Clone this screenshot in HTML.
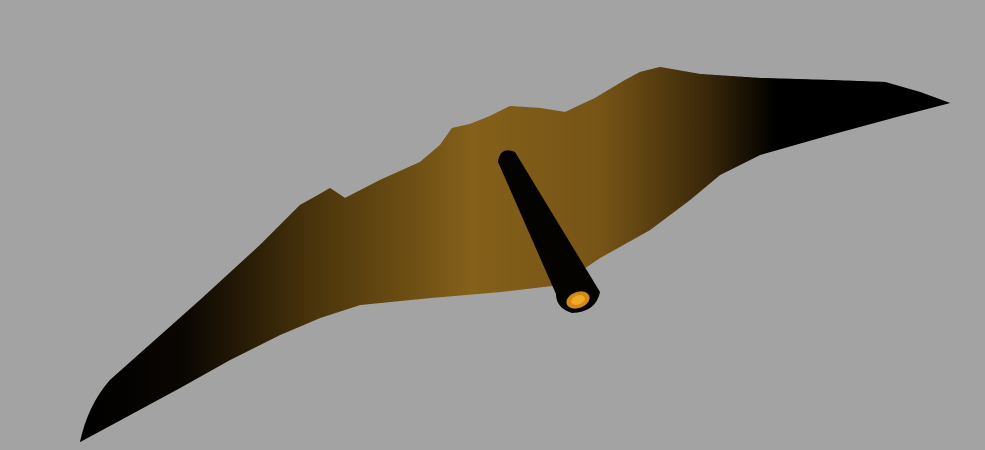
<!DOCTYPE html>
<html><head><style>html,body{margin:0;padding:0;background:#a3a3a3;width:985px;height:450px;overflow:hidden}</style></head>
<body>
<svg width="985" height="450" viewBox="0 0 985 450" xmlns="http://www.w3.org/2000/svg">
<defs>
<linearGradient id="g" x1="80" y1="0" x2="950" y2="0" gradientUnits="userSpaceOnUse">
<stop offset="0" stop-color="#000"/>
<stop offset="0.12" stop-color="#0a0602"/>
<stop offset="0.28" stop-color="#4e370c"/>
<stop offset="0.45" stop-color="#84601a"/>
<stop offset="0.6" stop-color="#765416"/>
<stop offset="0.72" stop-color="#3a280a"/>
<stop offset="0.8" stop-color="#000"/>
<stop offset="1" stop-color="#000"/>
</linearGradient>
<pattern id="p" width="4" height="3" patternUnits="userSpaceOnUse" patternTransform="rotate(-12)">
<rect width="4" height="1" fill="#000" opacity="0.35"/>
</pattern>
</defs>
<path id="w" d="M80,442 Q88,405 110,380 L200,300 L260,245 L300,205 L318,195 L330,188 L345,198 L380,180 L420,162 L440,145 L452,128 L470,124 L490,116 L510,106 L540,108 L565,112 L595,98 L625,80 L640,72 L660,67 L700,74 L760,78 L830,80 L885,82 L920,92 L950,103 L900,116 L830,135 L760,155 L720,175 L690,200 L650,230 L600,258 L560,285 L500,292 L430,298 L360,305 L320,318 L280,335 L230,360 L180,388 L130,415 Z" fill="url(#g)"/>
<use href="#w" fill="url(#p)"/>
<path d="M498,162 Q500,146 515,152 L600,292 Q596,312 572,313 Q556,308 556,294 Z" fill="#050300"/>
<ellipse cx="578" cy="300" rx="12" ry="8" fill="#d08a18" transform="rotate(-20 578 300)"/>
<ellipse cx="578" cy="300" rx="7" ry="4.5" fill="#f0a828" transform="rotate(-20 578 300)"/>
</svg>
</body></html>
